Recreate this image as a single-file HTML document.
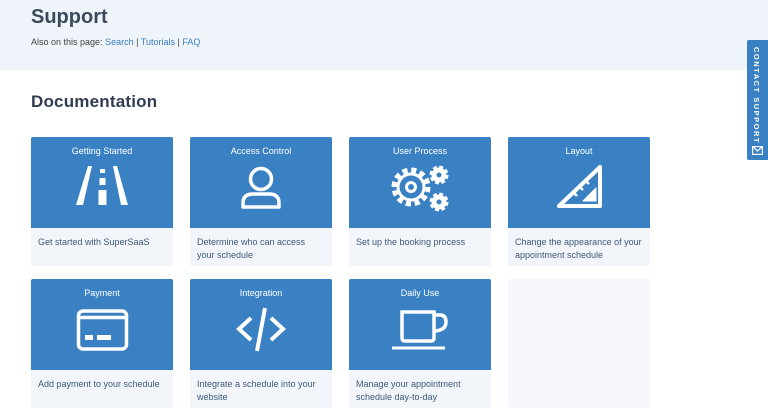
<!DOCTYPE html>
<html><head><meta charset="utf-8"><style>
*{margin:0;padding:0;box-sizing:border-box}
body{width:768px;height:416px;overflow:hidden;background:#fff;font-family:"Liberation Sans",sans-serif;position:relative}
.hdr{position:absolute;left:0;top:0;width:768px;height:70px;background:#eff4fa}
h1{position:absolute;left:31px;top:6px;font-size:20px;font-weight:bold;color:#3b4a5e}
.also{position:absolute;left:31px;top:37px;font-size:9px;color:#444}
.also a{color:#3a7fc4;text-decoration:none}
h2{position:absolute;left:31px;top:92px;font-size:17px;font-weight:bold;color:#2f3d52;letter-spacing:0.2px}
.card{position:absolute;width:142px;height:129px;background:#f2f5f9;border-radius:2px;overflow:hidden}
.top{height:91px;background:#3a81c4;color:#fff;text-align:center;font-size:9px;padding-top:9px;position:relative}
.top svg{position:absolute;left:0;top:0}
.desc{padding:8px 7px;font-size:9px;line-height:13px;color:#3d5a7a}
.tab{position:absolute;left:747px;top:40px;width:21px;height:120px;background:#3a81c4;border-radius:2px 0 0 2px}
.tab span{position:absolute;left:5px;top:7px;writing-mode:vertical-rl;color:#fff;font-size:7.5px;font-weight:bold;letter-spacing:1.5px}
</style></head><body>
<div class="hdr"></div>
<h1>Support</h1>
<div class="also">Also on this page: <a>Search</a> | <a>Tutorials</a> | <a>FAQ</a></div>
<h2>Documentation</h2>

<div class="card" style="left:31px;top:137px"><div class="top"><span style="position:relative;z-index:1">Getting Started</span>
<svg width="142" height="91" viewBox="0 0 142 91" fill="#fff"><path d="M57 29 L61 29 L52 68 L45 68Z"/><path d="M82 29 L86 29 L97 68 L90 68Z"/><rect x="69" y="32" width="5" height="4"/><rect x="68.5" y="41" width="6" height="7"/><rect x="67.5" y="53" width="8" height="15"/></svg></div>
<div class="desc">Get started with SuperSaaS</div></div>

<div class="card" style="left:190px;top:137px"><div class="top"><span style="position:relative;z-index:1">Access Control</span>
<svg width="142" height="91" viewBox="0 0 142 91" fill="none" stroke="#fff" stroke-width="3.5"><circle cx="71" cy="42" r="10.5"/><path d="M53 70 V66 Q53 57 63 57 H79 Q89 57 89 66 V70 Z" stroke-linejoin="round"/></svg></div>
<div class="desc">Determine who can access your schedule</div></div>

<div class="card" style="left:349px;top:137px"><div class="top"><span style="position:relative;z-index:1">User Process</span>
<svg width="142" height="91" viewBox="0 0 142 91" fill="none" stroke="#fff"><circle cx="62" cy="50" r="16.5" stroke-width="6" stroke-dasharray="5 3.65"/><circle cx="62" cy="50" r="13" stroke-width="3"/><circle cx="62" cy="50" r="4.5" stroke-width="3"/><circle cx="90" cy="38" r="7.5" stroke-width="4" stroke-dasharray="3.5 2.4"/><circle cx="90" cy="38" r="5" stroke-width="5"/><circle cx="90" cy="65" r="7.5" stroke-width="4" stroke-dasharray="3.5 2.4"/><circle cx="90" cy="65" r="5" stroke-width="5"/></svg></div>
<div class="desc">Set up the booking process</div></div>

<div class="card" style="left:508px;top:137px"><div class="top"><span style="position:relative;z-index:1">Layout</span>
<svg width="142" height="91" viewBox="0 0 142 91" fill="none" stroke="#fff" stroke-width="4" stroke-linejoin="round"><path d="M92 30 L92 69 L51 69 Z"/><path d="M75 64 L88 64 L88 51Z" fill="#fff" stroke-width="1"/><path d="M78 44 l3 3 M72 50 l3 3 M66 56 l3 3" stroke-width="2.5"/></svg></div>
<div class="desc">Change the appearance of your appointment schedule</div></div>

<div class="card" style="left:31px;top:279px"><div class="top"><span style="position:relative;z-index:1">Payment</span>
<svg width="142" height="91" viewBox="0 0 142 91" fill="none" stroke="#fff" stroke-width="3.5"><rect x="47.5" y="32" width="48" height="38" rx="4.5"/><path d="M47 38.5 H96" stroke-width="3.5"/><rect x="54" y="56" width="8" height="5" fill="#fff" stroke="none"/><rect x="66" y="56" width="14" height="5" fill="#fff" stroke="none"/></svg></div>
<div class="desc">Add payment to your schedule</div></div>

<div class="card" style="left:190px;top:279px"><div class="top"><span style="position:relative;z-index:1">Integration</span>
<svg width="142" height="91" viewBox="0 0 142 91" fill="none" stroke="#fff" stroke-width="4"><path d="M61 39 L49 50 L61 61 M81 39 L93 50 L81 61 M75 29 L67 72"/></svg></div>
<div class="desc">Integrate a schedule into your website</div></div>

<div class="card" style="left:349px;top:279px"><div class="top"><span style="position:relative;z-index:1">Daily Use</span>
<svg width="142" height="91" viewBox="0 0 142 91" fill="none" stroke="#fff" stroke-width="3.5"><path d="M53 33 H85 V59 Q85 62 82 62 H56 Q53 62 53 59 Z"/><path d="M85 36 H91 Q97 36 97 43 Q97 51 86 52"/><path d="M43 69 H96" stroke-width="3"/></svg></div>
<div class="desc">Manage your appointment schedule day-to-day</div></div>

<div class="card" style="left:508px;top:279px;background:#f5f7fa"></div>

<div class="tab"><span>CONTACT SUPPORT</span>
<svg width="11" height="9" viewBox="0 0 11 9" style="position:absolute;left:5px;top:106px" fill="none" stroke="#fff" stroke-width="1.2"><rect x="0.6" y="0.6" width="9.8" height="7.8"/><path d="M0.6 0.6 L5.5 5 L10.4 0.6"/></svg></div>
</body></html>
